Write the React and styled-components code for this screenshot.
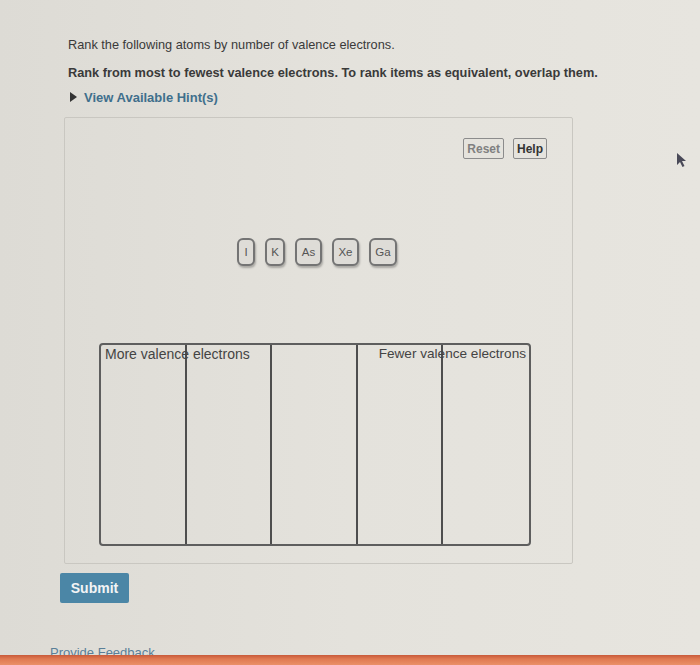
import React from "react";
import styled, { createGlobalStyle } from "styled-components";

const GlobalStyle = createGlobalStyle`
  html, body {
    margin: 0;
    padding: 0;
    background: #e2e0da;
  }
`;

const Page = styled.div`
  position: relative;
  width: 700px;
  height: 665px;
  overflow: hidden;
  font-family: "Liberation Sans", Arial, sans-serif;
  background: linear-gradient(90deg, #dddbd5 0%, #e4e2dc 50%, #e7e5df 100%);
  display: flex;
  flex-direction: column;
  box-sizing: border-box;
  padding-top: 36px;
`;

const Content = styled.div`
  margin-left: 68px;
  display: flex;
  flex-direction: column;
`;

const Prompt = styled.div`
  font-size: 12.75px;
  line-height: 18px;
  color: #3a3a3a;
  font-weight: ${(p) => (p.$bold ? 700 : 400)};
  margin-top: ${(p) => p.$mt || 0}px;
  white-space: nowrap;
`;

const HintRow = styled.div`
  margin-top: 6px;
  display: flex;
  align-items: center;
  gap: 7px;
  height: 18px;
  font-size: 13px;
  font-weight: 700;
  color: #3f6f8c;
`;

const Caret = styled.span`
  width: 0;
  height: 0;
  border-top: 5px solid transparent;
  border-bottom: 5px solid transparent;
  border-left: 7px solid #333;
  margin-left: 2px;
`;

const Panel = styled.div`
  margin-top: 11px;
  margin-left: -4px;
  width: 509px;
  height: 447px;
  box-sizing: border-box;
  border: 1px solid #c9c7c1;
  border-radius: 2px;
  display: flex;
  flex-direction: column;
  padding: 20px 25px 0 34px;
`;

const Toolbar = styled.div`
  display: flex;
  justify-content: flex-end;
  gap: 9px;
`;

const ToolButton = styled.button`
  font-family: inherit;
  font-size: 12px;
  font-weight: 700;
  height: 21px;
  padding: 0 3px;
  background: transparent;
  border: 1px solid #8c8c8c;
  border-radius: 2px;
  color: ${(p) => (p.$dim ? "#808080" : "#333")};
`;

const TileRow = styled.div`
  margin-top: 79px;
  display: flex;
  gap: 10px;
  padding-left: 138px;
`;

const Tile = styled.div`
  height: 28px;
  min-width: ${(p) => p.$w}px;
  box-sizing: border-box;
  display: flex;
  align-items: center;
  justify-content: center;
  background: #dedcd7;
  border: 2px solid #747474;
  border-radius: 6px;
  box-shadow: 1px 2px 2px rgba(0, 0, 0, 0.25);
  font-size: 11.5px;
  color: #555;
`;

const RankBox = styled.div`
  position: relative;
  margin-top: 77px;
  width: 432px;
  height: 203px;
  box-sizing: border-box;
  border: 2px solid #5e5e5e;
  border-radius: 4px;
  display: grid;
  grid-template-columns: repeat(5, 1fr);
`;

const Column = styled.div`
  border-right: ${(p) => (p.$last ? "none" : "2px solid #4e4e4e")};
`;

const RankLabel = styled.div`
  position: absolute;
  top: 1px;
  ${(p) => (p.$right ? "right: 3px;" : "left: 4px;")}
  font-size: ${(p) => (p.$right ? 13.6 : 14)}px;
  color: #444;
`;

const SubmitButton = styled.button`
  margin-top: 9px;
  margin-left: -8px;
  width: 69px;
  height: 30px;
  border: none;
  border-radius: 2px;
  background: #4b86a6;
  color: #f2f4f5;
  font-family: inherit;
  font-size: 14px;
  font-weight: 700;
`;

const Footer = styled.div`
  margin-top: auto;
  display: flex;
  flex-direction: column;
`;

const Feedback = styled.div`
  margin-left: 50px;
  font-size: 13px;
  line-height: 14px;
  height: 9px;
  overflow: hidden;
  color: #5a7f98;
`;

const OrangeBar = styled.div`
  height: 10px;
  background: linear-gradient(180deg, #c85a3a 0%, #e07a52 40%, #ea9068 100%);
`;

const Cursor = styled.svg`
  position: absolute;
  left: 676px;
  top: 152px;
`;

const tiles = [
  { label: "I", w: 18 },
  { label: "K", w: 20 },
  { label: "As", w: 27 },
  { label: "Xe", w: 27 },
  { label: "Ga", w: 28 },
];

export default function App() {
  return (
    <Page>
      <GlobalStyle />
      <Content>
        <Prompt>Rank the following atoms by number of valence electrons.</Prompt>
        <Prompt $bold $mt={10}>
          Rank from most to fewest valence electrons. To rank items as equivalent, overlap them.
        </Prompt>
        <HintRow>
          <Caret />
          <span>View Available Hint(s)</span>
        </HintRow>
        <Panel>
          <Toolbar>
            <ToolButton $dim>Reset</ToolButton>
            <ToolButton>Help</ToolButton>
          </Toolbar>
          <TileRow>
            {tiles.map((t) => (
              <Tile key={t.label} $w={t.w}>
                {t.label}
              </Tile>
            ))}
          </TileRow>
          <RankBox>
            {[0, 1, 2, 3, 4].map((i) => (
              <Column key={i} $last={i === 4} />
            ))}
            <RankLabel>More valence electrons</RankLabel>
            <RankLabel $right>Fewer valence electrons</RankLabel>
          </RankBox>
        </Panel>
        <SubmitButton>Submit</SubmitButton>
      </Content>
      <Footer>
        <Feedback>Provide Feedback</Feedback>
        <OrangeBar />
      </Footer>
      <Cursor width="12" height="16" viewBox="0 0 12 16">
        <path d="M1 1 L1 13 L4 10 L6.5 15 L8.5 14 L6 9 L10 9 Z" fill="#4a4a58" />
      </Cursor>
    </Page>
  );
}
